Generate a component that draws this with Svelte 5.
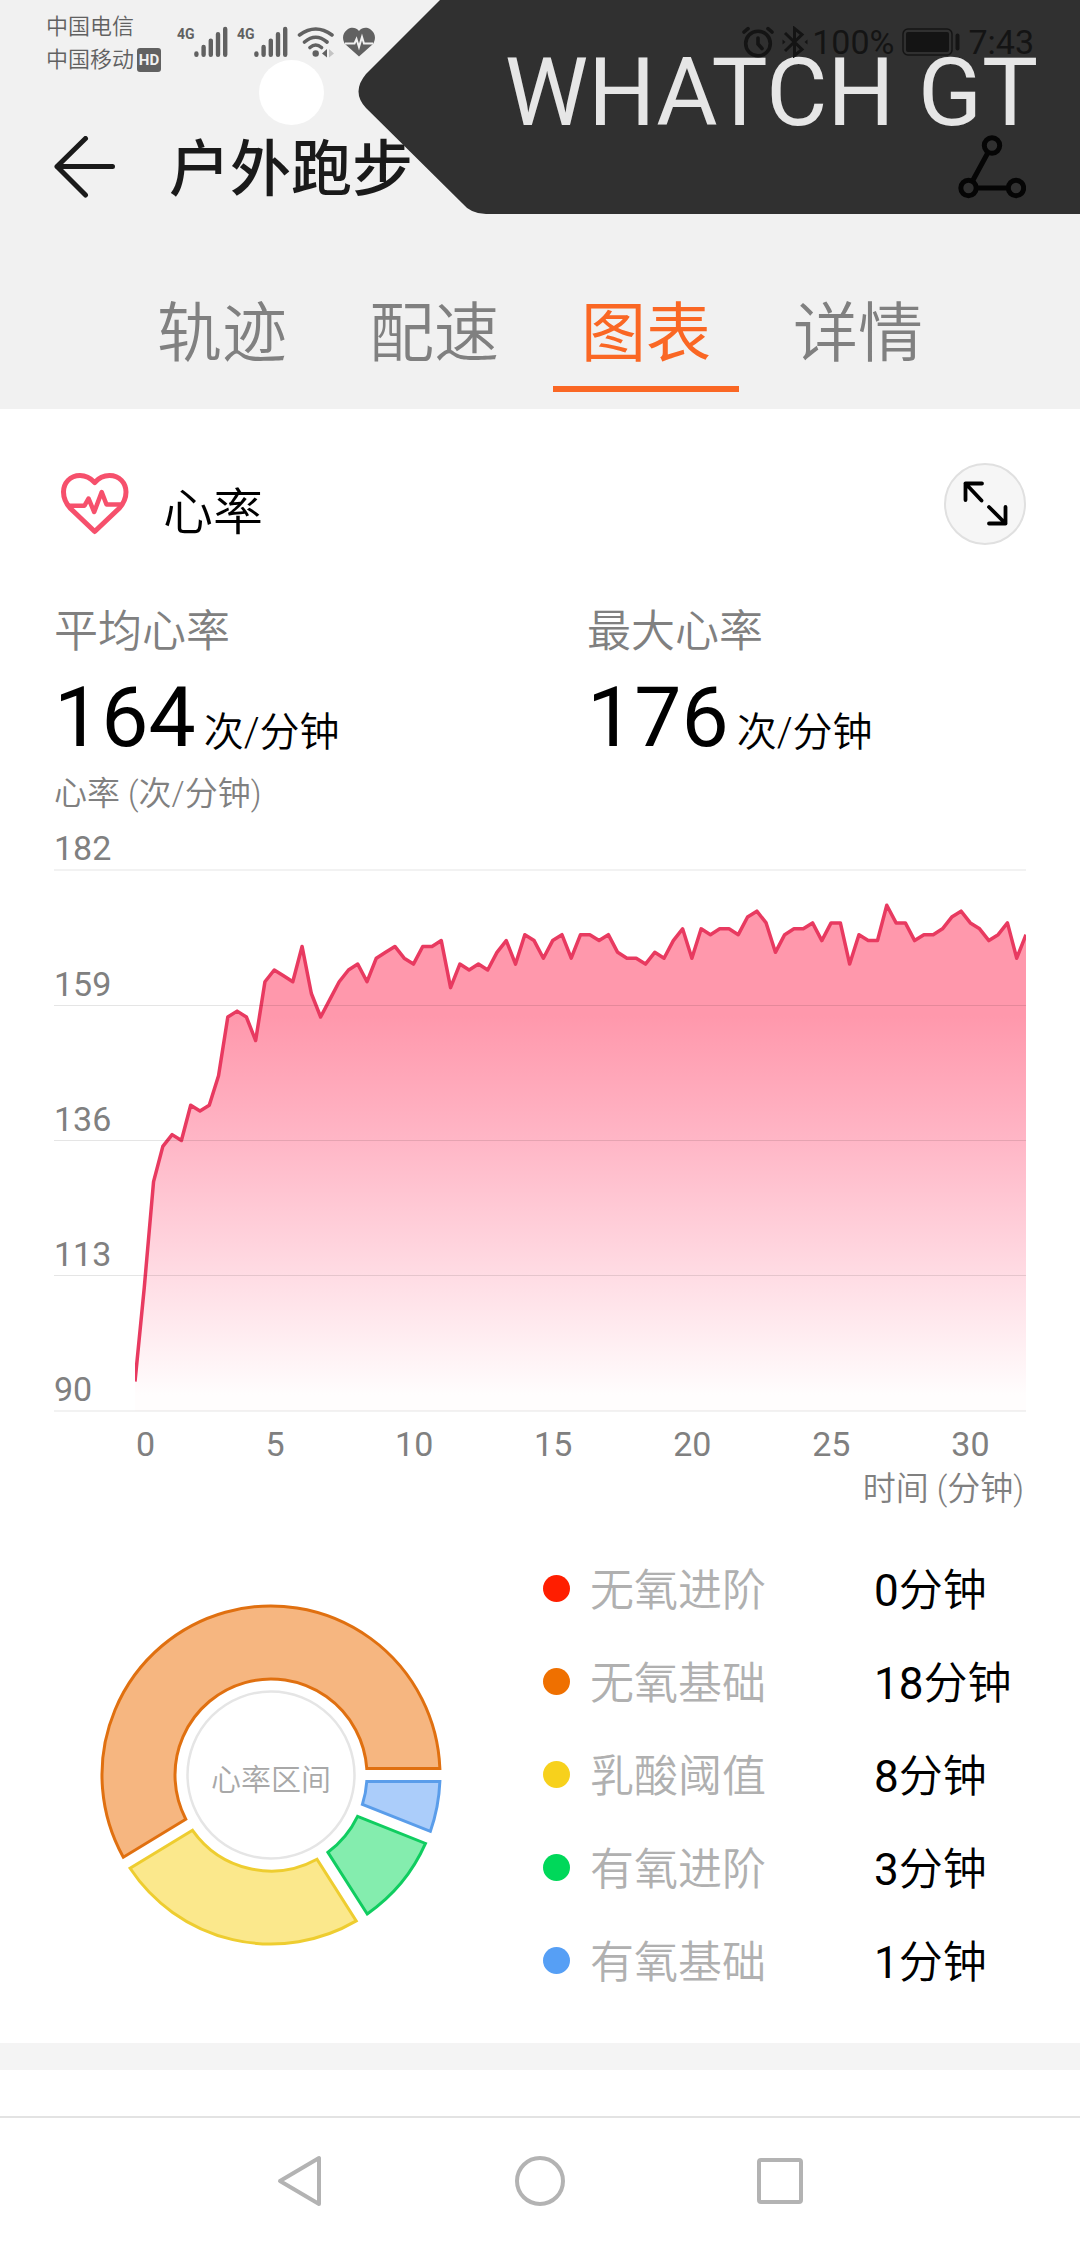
<script>
  const tabs = ['轨迹', '配速', '图表', '详情'];
  let activeTab = $state('图表');

  const stats = [
    { label: '平均心率', value: 164 },
    { label: '最大心率', value: 176 }
  ];

  const MIN_RATE = 90;
  const MAX_RATE = 182;
  const yTicks = [182, 159, 136, 113, 90];
  const xTicks = [0, 5, 10, 15, 20, 25, 30];

  const rates = [
    95, 111, 129, 135, 137, 136, 142, 141, 142, 147, 157, 158, 157, 153, 163, 165,
    164, 163, 169, 161, 157, 160, 163, 165, 166, 163, 167, 168, 169, 167, 166, 169,
    169, 170, 162, 166, 165, 166, 165, 168, 170, 166, 171, 170, 167, 170, 171, 167,
    171, 171, 170, 171, 168, 167, 167, 166, 168, 167, 170, 172, 167, 172, 171, 172,
    172, 171, 174, 175, 173, 168, 171, 172, 172, 173, 170, 173, 173, 166, 171, 170,
    170, 176, 173, 173, 170, 171, 171, 172, 174, 175, 173, 172, 170, 171, 173, 167,
    171
  ];

  const lastX = rates.length - 1;
  const range = MAX_RATE - MIN_RATE;
  const linePoints = rates.map((rate, i) => `${i},${MAX_RATE - rate}`).join(' ');
  const areaPoints = `0,${range} ${linePoints} ${lastX},${range}`;

  const zones = [
    { name: '无氧进阶', minutes: 0, color: '#ff1e00' },
    { name: '无氧基础', minutes: 18, color: '#ef7000' },
    { name: '乳酸阈值', minutes: 8, color: '#f7d11c' },
    { name: '有氧进阶', minutes: 3, color: '#00d85a' },
    { name: '有氧基础', minutes: 1, color: '#569ff5' }
  ];

  // angles in degrees, clockwise from 3 o'clock
  const slices = [
    { from: 148.7, to: 360, fill: '#f6b680', stroke: '#e07010' },
    { from: 57.5, to: 148.7, fill: '#fbe88c', stroke: '#eecd30' },
    { from: 21.7, to: 57.5, fill: '#84edae', stroke: '#10cd60' },
    { from: 0, to: 21.7, fill: '#abcdfa', stroke: '#5a9dea' }
  ];

  const OUTER = 169;
  const INNER = 96;
  const HALF_GAP = 6.5;

  function point(radius, degrees, side) {
    const angle = (degrees * Math.PI) / 180 + side * Math.asin(HALF_GAP / radius);
    return `${(radius * Math.cos(angle)).toFixed(2)} ${(radius * Math.sin(angle)).toFixed(2)}`;
  }

  // each slice keeps a parallel gap to its neighbours
  function slicePath({ from, to }) {
    const large = to - from > 180 ? 1 : 0;
    return [
      `M${point(OUTER, from, 1)}`,
      `A${OUTER} ${OUTER} 0 ${large} 1 ${point(OUTER, to, -1)}`,
      `L${point(INNER, to, -1)}`,
      `A${INNER} ${INNER} 0 ${large} 0 ${point(INNER, from, 1)}`,
      'Z'
    ].join(' ');
  }
</script>

{#snippet signal()}
  <span class="network">4G</span>
  <svg class="signal" width="34" height="32" viewBox="0 0 34 32" stroke="#616161" stroke-width="4.4" stroke-linecap="round">
    <path d="M2.4 27.4v1.4M9.6 21v7.8M16.8 14.6v14.2M24 8.3v20.5M31.2 3v25.8" />
  </svg>
{/snippet}

<div class="page">
  <header class="header">
    <div class="watermark">
      <svg class="watermark-shape" width="722" height="215" viewBox="0 0 722 215">
        <path d="M82 0L8 74Q-7 92 8 108L104 203Q113 214 128 214H722V0Z" fill="#303030" />
      </svg>
      <span class="watermark-text">WHATCH GT</span>
    </div>
    <span class="bubble"></span>

    <div class="status">
      <div class="carriers">
        <div class="carrier">中国电信</div>
        <div class="carrier">中国移动<span class="hd">HD</span></div>
      </div>
      {@render signal()}
      {@render signal()}
      <svg class="wifi" width="38" height="32" viewBox="0 0 38 32" fill="none" stroke="#616161" stroke-width="3.6" stroke-linecap="round">
        <path d="M2.5 9Q18.7-3 35 9M7.5 16Q18.7 6.5 30 16M13 21.5Q18.7 16.5 24.5 21.5" />
        <circle cx="18.7" cy="27.5" r="3.2" fill="#616161" stroke="none" />
        <path d="M25 27.5L30 23v8.5Z" fill="#616161" stroke="none" />
        <path d="M32 23l5 4.5l-5 4Z" fill="#c4c4c4" stroke="none" />
      </svg>
      <svg width="32" height="30" viewBox="0 0 32 30">
        <path d="M16 4C13 0 8 0 5 2C-1 6-1 12 2 17L16 29.5L30 17C33 12 33 6 27 2C24 0 19 0 16 4Z" fill="#616161" />
        <path d="M2 16.5H11.5L13.5 12L16 20L19 10L21 16.5H30" fill="none" stroke="#f1f1f1" stroke-width="2" />
      </svg>

      <div class="status-right">
        <svg class="alarm" width="32" height="32" viewBox="0 0 32 32" fill="none" stroke="#141414" stroke-width="3.6" stroke-linecap="round">
          <circle cx="16" cy="17.5" r="12.3" />
          <path d="M16 12v6l4 4.5M2 6L6 2.6M30 6L26 2.6" />
        </svg>
        <svg width="26" height="32" viewBox="0 0 26 32" fill="none" stroke="#141414" stroke-width="3">
          <path d="M3 7L20 23.5L12.5 29.5V2.5L20 8.5L3 25" />
          <path d="M0.5 13.5v5l3-2.5ZM25.5 13.5v5l-3-2.5Z" fill="#141414" stroke="none" />
        </svg>
        <span class="percent">100%</span>
        <svg class="battery" width="58" height="28" viewBox="0 0 58 28">
          <rect x="1" y="1" width="49" height="26" rx="5" fill="none" stroke="#141414" stroke-width="1.5" />
          <rect x="4" y="4" width="43" height="20" rx="2" fill="#141414" />
          <rect x="53.5" y="5.5" width="4" height="17" rx="2" fill="#141414" />
        </svg>
        <span>7:43</span>
      </div>
    </div>

    <div class="title-row">
      <button aria-label="返回">
        <svg width="62" height="62" viewBox="0 0 62 62" fill="none" stroke="#1a1a1a" stroke-width="5" stroke-linecap="round" stroke-linejoin="round">
          <path d="M58.5 30.5H3M31.5 2.5L3 30.5L31.5 59" />
        </svg>
      </button>
      <h1>户外跑步</h1>
      <button class="share" aria-label="分享">
        <svg width="68" height="64" viewBox="0 0 68 64" fill="none" stroke="#050505" stroke-width="5">
          <circle cx="34" cy="10.5" r="7.7" />
          <circle cx="10.5" cy="53" r="7.7" />
          <circle cx="58" cy="53" r="7.7" />
          <path d="M30 17.5L14.5 46M18 53H50" />
        </svg>
      </button>
    </div>

    <nav class="tabs">
      {#each tabs as tab}
        <button class="tab" class:active={tab === activeTab} onclick={() => (activeTab = tab)}>
          {tab}
        </button>
      {/each}
    </nav>
  </header>

  <main class="content">
    <div class="section-head">
      <svg width="82" height="82" viewBox="0 0 82 82" fill="none" stroke="#f6506c" stroke-width="5" stroke-linecap="round" stroke-linejoin="round">
        <path d="M40.7 19.5C36 14.5 31 12.5 26 12.5C16 12.5 9.5 20 9.5 29C9.5 36 12 40.5 16.5 45.5L40.7 68.5L65 45.5C69.5 40.5 72 36 72 29C72 20 65.5 12.5 55.5 12.5C50 12.5 45 14.5 40.7 19.5Z" />
        <path d="M15.3 42.7H30.5L34.5 35.5L40.2 49L47.7 29L52.5 41.5H66" stroke-width="4.5" />
      </svg>
      <h2>心率</h2>
      <button class="expand" aria-label="全屏">
        <svg width="82" height="82" viewBox="0 0 82 82" fill="none" stroke="#000" stroke-width="3.8" stroke-linecap="round" stroke-linejoin="round">
          <path d="M38 20.5H21.5V37M21.5 20.5L37.5 37.5M45 60.5H61.5V44M61.5 60.5L45 44" />
        </svg>
      </button>
    </div>

    <div class="stats">
      {#each stats as stat}
        <div>
          <div class="stat-label">{stat.label}</div>
          <div class="stat-value">
            <span class="stat-number">{stat.value}</span>
            <span class="stat-unit">次/分钟</span>
          </div>
        </div>
      {/each}
    </div>

    <div class="axis-title">心率 (次/分钟)</div>
    <div class="chart">
      <svg class="plot" viewBox="0 0 {lastX} {range}" preserveAspectRatio="none">
        <defs>
          <linearGradient id="rate-fill" gradientUnits="userSpaceOnUse" x1="0" y1="0" x2="0" y2={range}>
            <stop offset="0.27" stop-color="#ff98ac" />
            <stop offset="0.5" stop-color="#ffb6c6" />
            <stop offset="0.75" stop-color="#ffdce4" />
            <stop offset="0.97" stop-color="#fffdfd" />
          </linearGradient>
        </defs>
        <polygon points={areaPoints} fill="url(#rate-fill)" />
        <polyline points={linePoints} fill="none" stroke="#e83a60" stroke-width="3.5" stroke-linejoin="round" vector-effect="non-scaling-stroke" />
      </svg>
      <div class="grid-rows">
        {#each yTicks as tick}
          <div class="grid-row"><span>{tick}</span></div>
        {/each}
      </div>
    </div>
    <div class="x-axis">
      {#each xTicks as tick}
        <span>{tick}</span>
      {/each}
    </div>
    <div class="axis-title time">时间 (分钟)</div>

    <div class="zones">
      <svg class="donut" width="342" height="342" viewBox="-171 -171 342 342">
        {#each slices as slice}
          <path d={slicePath(slice)} fill={slice.fill} stroke={slice.stroke} stroke-width="3" />
        {/each}
        <circle r="83.5" fill="none" stroke="#e5e5e5" stroke-width="2.5" />
        <text y="15" text-anchor="middle" font-size="30" font-weight="350" fill="#a8a8a8">心率区间</text>
      </svg>
      <ul class="legend">
        {#each zones as zone}
          <li>
            <span class="dot" style="background: {zone.color}"></span>
            <span class="zone-name">{zone.name}</span>
            <span class="zone-time">{zone.minutes}<span class="zone-unit">分钟</span></span>
          </li>
        {/each}
      </ul>
    </div>
  </main>

  <div class="divider"></div>

  <footer class="system-nav">
    <button aria-label="后退">
      <svg width="52" height="52" viewBox="0 0 52 52" fill="none" stroke="#b3b3b3" stroke-width="4" stroke-linejoin="round">
        <path d="M45 3V49L6 26Z" />
      </svg>
    </button>
    <button aria-label="主页">
      <svg width="52" height="52" viewBox="0 0 52 52" fill="none" stroke="#b3b3b3" stroke-width="4">
        <circle cx="26" cy="26" r="23" />
      </svg>
    </button>
    <button aria-label="最近任务">
      <svg width="52" height="52" viewBox="0 0 52 52" fill="none" stroke="#b3b3b3" stroke-width="4">
        <rect x="5" y="5" width="42" height="42" rx="2" />
      </svg>
    </button>
  </footer>
</div>

<style>
  :global(body) {
    background: #fff;
  }

  .page {
    display: flex;
    flex-direction: column;
    min-height: 100vh;
    font-family: Roboto, 'Noto Sans CJK SC', sans-serif;
    color: #000;
  }

  button {
    background: none;
    border: none;
    padding: 0;
    font-family: inherit;
    color: inherit;
    cursor: pointer;
  }

  svg {
    display: block;
    flex-shrink: 0;
  }

  .header {
    position: relative;
    overflow: hidden;
    background: #f1f1f1;
    padding-bottom: 17px;
  }

  .watermark {
    position: absolute;
    top: 0;
    right: 0;
    z-index: 1;
  }

  .watermark-text {
    position: absolute;
    top: 58px;
    right: 42px;
    font-size: 94px;
    line-height: 70px;
    color: #e6e6e6;
    white-space: nowrap;
  }

  .bubble {
    position: absolute;
    top: 60px;
    left: 259px;
    width: 65px;
    height: 65px;
    border-radius: 50%;
    background: #fff;
  }

  .status {
    display: flex;
    align-items: center;
    height: 84px;
    padding: 0 46px;
  }

  .carriers {
    margin-right: 16px;
    padding-top: 2px;
  }

  .carrier {
    display: flex;
    align-items: center;
    font-size: 22px;
    font-weight: 350;
    line-height: 33px;
    color: #616161;
  }

  .hd {
    width: 24px;
    margin-left: 3px;
    border-radius: 3px;
    background: #616161;
    color: #f1f1f1;
    font-size: 15px;
    font-weight: 700;
    line-height: 24px;
    text-align: center;
  }

  .network {
    align-self: flex-start;
    width: 17px;
    margin-top: 24px;
    font-size: 14px;
    font-weight: 700;
    line-height: 20px;
    color: #616161;
  }

  .signal {
    margin-right: 9px;
  }

  .wifi {
    margin-right: 8px;
  }

  .status-right {
    position: relative;
    z-index: 2;
    display: flex;
    align-items: center;
    margin-left: auto;
    font-size: 34px;
    line-height: 30px;
    color: #141414;
  }

  .alarm {
    margin-right: 8px;
  }

  .percent {
    margin-left: 4px;
  }

  .battery {
    margin: 0 8px;
  }

  .title-row {
    display: flex;
    align-items: center;
    height: 166px;
    padding: 0 54px;
  }

  h1 {
    margin: 0 0 0 53px;
    padding-top: 6px;
    font-size: 61px;
    font-weight: 500;
    line-height: 88px;
    color: #1a1a1a;
  }

  .share {
    position: relative;
    z-index: 2;
    margin-left: auto;
  }

  .tabs {
    display: flex;
    justify-content: center;
    gap: 26px;
  }

  .tab {
    width: 186px;
    padding: 44px 0 12px;
    border-bottom: 6px solid transparent;
    font-size: 65px;
    font-weight: 350;
    line-height: 80px;
    color: #808080;
  }

  .tab.active {
    color: #fa6724;
    border-bottom-color: #fa6724;
    font-weight: 400;
  }

  .content {
    padding: 54px 54px 36px;
  }

  .section-head {
    display: flex;
    align-items: center;
  }

  h2 {
    margin: 0 0 0 27px;
    padding-top: 18px;
    font-size: 50px;
    font-weight: 350;
    line-height: 64px;
  }

  .expand {
    box-sizing: border-box;
    display: grid;
    place-content: center;
    width: 82px;
    height: 82px;
    margin-left: auto;
    border: 2px solid #e0e0e0;
    border-radius: 50%;
    background: #f6f6f6;
  }

  .stats {
    display: grid;
    grid-template-columns: 1fr 439px;
    margin-top: 57px;
  }

  .stat-label {
    font-size: 44px;
    font-weight: 350;
    line-height: 60px;
    color: #808080;
  }

  .stat-value {
    display: flex;
    align-items: baseline;
    gap: 8px;
    height: 100px;
    margin-top: 6px;
  }

  .stat-number {
    font-size: 84px;
    line-height: 100px;
  }

  .stat-unit {
    font-size: 40px;
    font-weight: 350;
    line-height: 60px;
  }

  .axis-title {
    margin-top: 3px;
    font-size: 33px;
    font-weight: 350;
    line-height: 46px;
    color: #808080;
  }

  .axis-title.time {
    margin: 0 2px 0 0;
    text-align: right;
  }

  .chart {
    display: grid;
  }

  .plot,
  .grid-rows {
    grid-area: 1 / 1;
  }

  .plot {
    box-sizing: border-box;
    width: calc(100% - 81px);
    height: 541px;
    margin: 53px 0 0 81px;
  }

  .grid-row {
    box-sizing: border-box;
    display: flex;
    align-items: flex-end;
    height: 135px;
    border-bottom: 1px solid rgba(0, 0, 0, 0.1);
    font-size: 34px;
    line-height: 42px;
    color: #808080;
  }

  .grid-row:first-child {
    height: 54px;
  }

  .grid-row:last-child {
    height: 136px;
  }

  .grid-row:first-child,
  .grid-row:last-child {
    border-bottom: 2px solid rgba(0, 0, 0, 0.05);
  }

  .x-axis {
    display: grid;
    grid-template-columns: 1fr repeat(6, 2fr);
    margin: 10px -14px 0 82px;
    font-size: 34px;
    line-height: 44px;
    text-align: center;
    color: #808080;
  }

  .x-axis span:first-child {
    text-align: left;
  }

  .zones {
    display: flex;
    align-items: center;
    margin-top: 30px;
  }

  .donut {
    margin: 0 101px 0 46px;
  }

  .legend {
    flex: 1;
    margin: 0;
    padding: 0;
    list-style: none;
  }

  .legend li {
    display: grid;
    grid-template-columns: 26px 1fr 152px;
    align-items: center;
    height: 93px;
    font-size: 44px;
    line-height: 64px;
  }

  .dot {
    width: 27px;
    height: 27px;
    border-radius: 50%;
  }

  .zone-name,
  .zone-time {
    padding-top: 4px;
  }

  .zone-name {
    padding-left: 21px;
    font-weight: 350;
    color: #b0b0b0;
  }

  .zone-unit {
    font-weight: 350;
  }

  .divider {
    height: 27px;
    margin-bottom: 45px;
    background: #f4f4f4;
  }

  .system-nav {
    display: flex;
    justify-content: center;
    margin-top: auto;
    border-top: 2px solid #e3e3e3;
  }

  .system-nav button {
    display: grid;
    place-content: center;
    width: 240px;
    height: 126px;
  }
</style>
